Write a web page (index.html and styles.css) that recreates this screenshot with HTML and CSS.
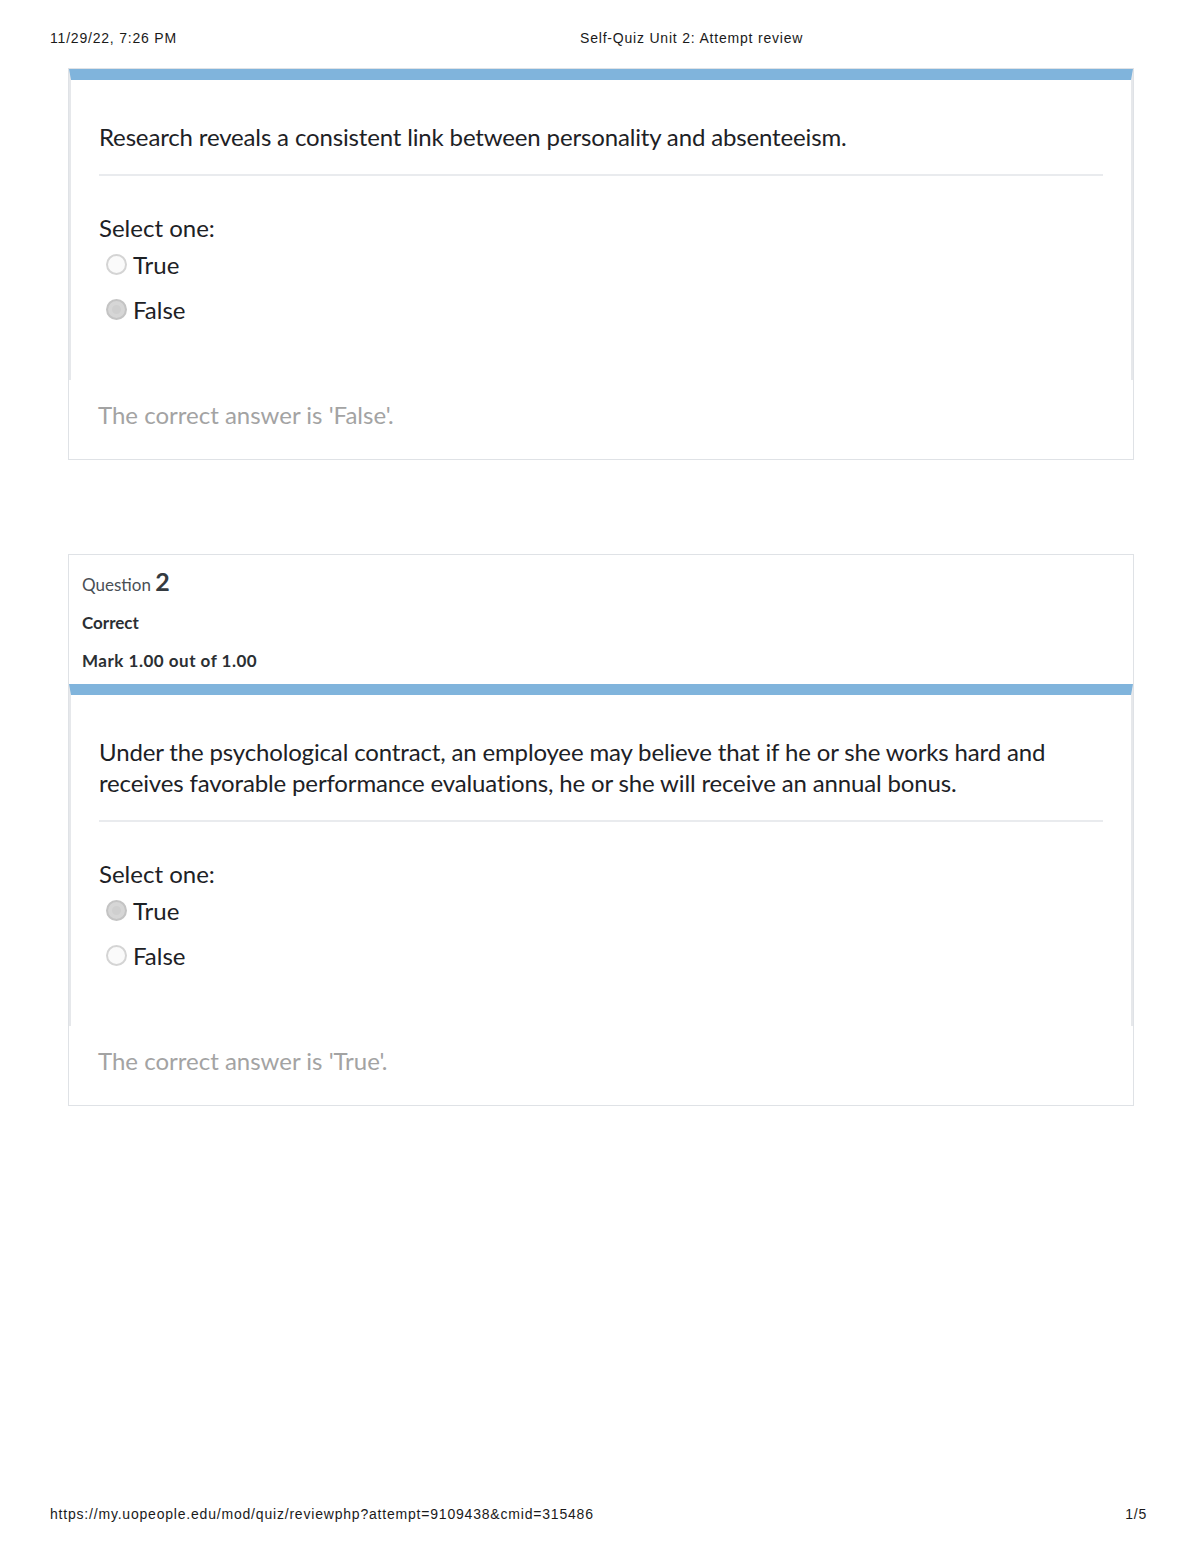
FILE: index.html
```html
<!DOCTYPE html>
<html lang="en">
<head>
<meta charset="utf-8">
<title>Self-Quiz Unit 2: Attempt review</title>
<link rel="stylesheet" href="styles.css">
</head>
<body>
<div class="page">
  <header class="print-head">
    <span class="date">11/29/22, 7:26 PM</span>
    <span class="title">Self-Quiz Unit 2: Attempt review</span>
  </header>

  <main class="content">
    <section class="que">
      <div class="formulation">
        <div class="qtext">Research reveals a consistent link between personality and absenteeism.</div>
        <div class="ablock">
          <div class="prompt">Select one:</div>
          <div class="answer">
            <div class="opt"><span class="radio"></span><span>True</span></div>
            <div class="opt"><span class="radio checked"></span><span>False</span></div>
          </div>
        </div>
      </div>
      <div class="outcome">The correct answer is 'False'.</div>
    </section>

    <section class="que">
      <div class="info">
        <div class="qno">Question <span class="num">2</span></div>
        <div class="state">Correct</div>
        <div class="grade">Mark 1.00 out of 1.00</div>
      </div>
      <div class="formulation">
        <div class="qtext">Under the psychological contract, an employee may believe that if he or she works hard and receives favorable performance evaluations, he or she will receive an annual bonus.</div>
        <div class="ablock">
          <div class="prompt">Select one:</div>
          <div class="answer">
            <div class="opt"><span class="radio checked"></span><span>True</span></div>
            <div class="opt"><span class="radio"></span><span>False</span></div>
          </div>
        </div>
      </div>
      <div class="outcome">The correct answer is 'True'.</div>
    </section>
  </main>

  <footer class="print-foot">
    <span class="url">https://my.uopeople.edu/mod/quiz/reviewphp?attempt=9109438&amp;cmid=315486</span>
    <span class="pageno">1/5</span>
  </footer>
</div>
</body>
</html>
```

FILE: styles.css
```css
html, body {
  margin: 0;
  padding: 0;
  background: #ffffff;
}

.page {
  height: 1553px;
  display: flex;
  flex-direction: column;
  font-family: "Lato", "Noto Sans", sans-serif;
  color: #1d2125;
}

.print-head,
.print-foot {
  font-family: "Liberation Sans", Arial, sans-serif;
  font-size: 14px;
  line-height: 16px;
  letter-spacing: 0.8px;
  color: #1a1a1a;
}

.print-head {
  display: grid;
  grid-template-columns: 530px auto;
  padding: 30px 0 0 50px;
}

.content {
  flex: 1;
  padding: 22px 0 0 68px;
  display: flex;
  flex-direction: column;
  gap: 94px;
}

.que {
  width: 1064px;
  border: 1px solid #dfe2e6;
}

.info {
  padding: 14px 13px 11px;
  font-size: 17px;
  line-height: 24px;
  display: flex;
  flex-direction: column;
  gap: 14px;
}

.qno {
  color: #4a4f55;
}

.qno .num {
  font-size: 25px;
  font-weight: 700;
  color: #343a40;
}

.state,
.grade {
  font-weight: 700;
  color: #2b2f33;
}

.grade {
  letter-spacing: 0.5px;
}

.formulation {
  border-top: 11px solid #80b4dc;
  border-left: 2px solid #e6e8eb;
  border-right: 2px solid #e6e8eb;
  padding: 41px 28px 55px;
}

.qtext {
  font-size: 24px;
  line-height: 31px;
  letter-spacing: -0.15px;
  padding-bottom: 22px;
  border-bottom: 2px solid #e9ebee;
}

.ablock {
  margin-top: 36px;
  font-size: 24px;
  line-height: 31px;
}

.answer {
  margin-top: 6px;
  display: flex;
  flex-direction: column;
  gap: 14px;
}

.opt {
  display: flex;
  align-items: center;
  gap: 6px;
  padding-left: 7px;
}

.radio {
  width: 17px;
  height: 17px;
  border: 2px solid #d4d4d4;
  border-radius: 50%;
  background: #fafafa;
  flex: none;
}

.radio.checked {
  background: #cfcfcf;
  border-color: #c4c4c4;
  box-shadow: inset 0 0 0 4px #d6d6d6;
}

.outcome {
  padding: 19px 29px 29px;
  font-size: 24px;
  line-height: 31px;
  color: #a3a3a3;
}

.print-foot {
  display: flex;
  justify-content: space-between;
  padding: 0 53px 31px 50px;
}
```
